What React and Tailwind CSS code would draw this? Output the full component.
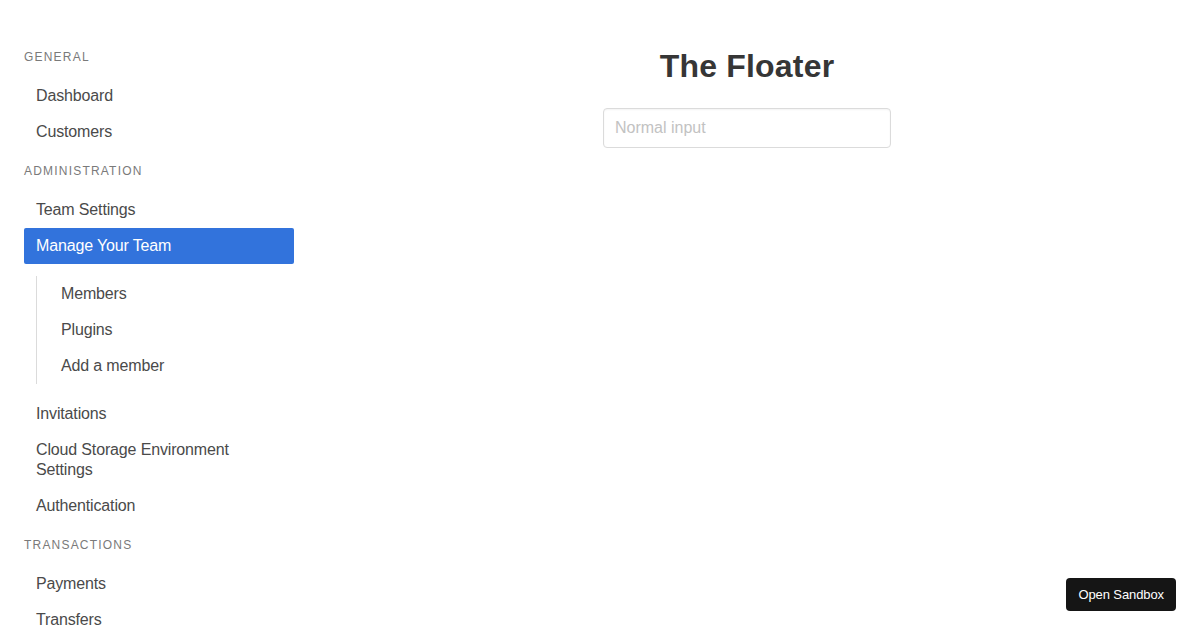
import React from 'react';

const font = { fontFamily: '"Liberation Sans", Arial, Helvetica, sans-serif' };

const MenuLabel = ({ children, first }) => (
  <p className={`text-[12px] leading-[18px] uppercase tracking-[0.1em] text-[#7a7a7a] mb-3 ${first ? '' : 'mt-3'}`}>
    {children}
  </p>
);

const MenuItem = ({ children, active }) => (
  <li>
    <a
      href="#"
      className={`block rounded-[2px] px-3 py-2 text-[16px] leading-[20px] tracking-[-0.15px] ${
        active ? 'bg-[#3273dc] text-white' : 'text-[#4a4a4a] hover:bg-[#f5f5f5]'
      }`}
    >
      {children}
    </a>
  </li>
);

const App = () => {
  return (
    <div className="min-h-[630px] bg-white flex" style={font}>
      <aside className="w-[294px] shrink-0 pl-6 pt-12">
        <MenuLabel first>General</MenuLabel>
        <ul>
          <MenuItem>Dashboard</MenuItem>
          <MenuItem>Customers</MenuItem>
        </ul>
        <MenuLabel>Administration</MenuLabel>
        <ul>
          <MenuItem>Team Settings</MenuItem>
          <MenuItem active>Manage Your Team</MenuItem>
          <li>
            <ul className="my-3 ml-3 pl-3 border-l border-[#dbdbdb]">
              <MenuItem>Members</MenuItem>
              <MenuItem>Plugins</MenuItem>
              <MenuItem>Add a member</MenuItem>
            </ul>
          </li>
          <MenuItem>Invitations</MenuItem>
          <MenuItem>Cloud Storage Environment Settings</MenuItem>
          <MenuItem>Authentication</MenuItem>
        </ul>
        <MenuLabel>Transactions</MenuLabel>
        <ul>
          <MenuItem>Payments</MenuItem>
          <MenuItem>Transfers</MenuItem>
        </ul>
      </aside>

      <main className="flex-1 flex flex-col items-center pt-12">
        <h1 className="text-[32px] leading-[36px] font-bold text-[#363636] tracking-[0.2px] mb-6">The Floater</h1>
        <input
          type="text"
          placeholder="Normal input"
          className="w-[288px] h-10 rounded-[4px] border border-[#dbdbdb] px-[11px] text-[16px] text-[#363636] placeholder:text-[#c2c2c2] shadow-[inset_0_1px_2px_rgba(10,10,10,0.05)] outline-none"
          style={font}
        />
      </main>

      <button
        className="fixed right-6 bottom-[19px] h-[33px] px-3 rounded-[4px] bg-[#151515] text-white text-[13px] tracking-[-0.1px]"
        style={font}
      >
        Open Sandbox
      </button>
    </div>
  );
};

export default App;
